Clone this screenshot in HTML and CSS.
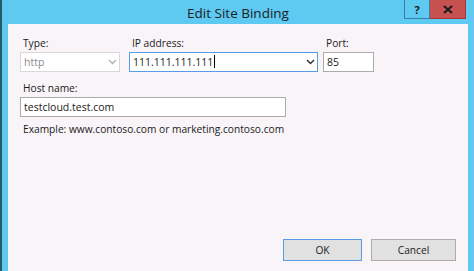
FILE: index.html
```html
<!DOCTYPE html>
<html>
<head>
<meta charset="utf-8">
<link rel="stylesheet" href="styles.css">
</head>
<body>
<div class="window">
  <div class="titlebar">
    <div class="title">Edit Site Binding</div>
    <div class="controls">
      <div class="btn-help">?</div>
      <div class="btn-close">
        <svg width="10" height="9" viewBox="0 0 10 9"><path d="M1 1 L9 8 M9 1 L1 8" stroke="#1a1a1a" stroke-width="2"/></svg>
      </div>
    </div>
  </div>
  <div class="content">
    <div class="row1">
      <div class="field f-type">
        <label>Type:</label>
        <div class="select disabled"><span>http</span><svg class="chev" width="9" height="6" viewBox="0 0 9 6"><path d="M1 1 L4.5 4.5 L8 1" fill="none" stroke="#b0b0b0" stroke-width="1.3"/></svg></div>
      </div>
      <div class="field f-ip">
        <label>IP address:</label>
        <div class="select focus"><span>111.111.111.111<i class="caret"></i></span><svg class="chev" width="9" height="6" viewBox="0 0 9 6"><path d="M1 1 L4.5 4.5 L8 1" fill="none" stroke="#333" stroke-width="1.5"/></svg></div>
      </div>
      <div class="field f-port">
        <label>Port:</label>
        <div class="input"><span>85</span></div>
      </div>
    </div>
    <div class="field f-host">
      <label>Host name:</label>
      <div class="input"><span>testcloud.test.com</span></div>
    </div>
    <div class="example">Example: www.contoso.com or marketing.contoso.com</div>
    <div class="spacer"></div>
    <div class="buttons">
      <div class="button">OK</div>
      <div class="button cancel">Cancel</div>
    </div>
  </div>
</div>
</body>
</html>
```
FILE: styles.css
```css
html, body {
  margin: 0;
  padding: 0;
  width: 474px;
  height: 271px;
  overflow: hidden;
  background: #5ec9f1;
}
.window {
  width: 474px;
  height: 271px;
  box-sizing: border-box;
  background: #5ec9f1;
  border-left: 2px solid #2a5a6a;
  padding: 0 6px 0 6px;
  display: flex;
  flex-direction: column;
  font-family: "Open Sans", sans-serif;
  font-size: 10.2px;
  color: #1a1a1a;
}
.titlebar {
  height: 24px;
  flex: none;
  position: relative;
  display: flex;
  justify-content: center;
  align-items: center;
}
.title {
  font-size: 13.5px;
  color: #1d1d1d;
  margin-top: 1px;
}
.controls {
  position: absolute;
  right: 2px;
  top: 0;
  display: flex;
}
.btn-help {
  width: 26px;
  height: 19px;
  box-sizing: border-box;
  border: 1px solid #3c7fa6;
  border-top: none;
  background: #5ec9f1;
  font-weight: bold;
  font-size: 11px;
  display: flex;
  align-items: center;
  justify-content: center;
  color: #1a1a1a;
}
.btn-close {
  width: 36px;
  height: 19px;
  box-sizing: border-box;
  background: #c75050;
  border-right: 1px solid #a33;
  border-bottom: 1px solid #a33;
  display: flex;
  align-items: center;
  justify-content: center;
}
.content {
  flex: 1;
  background: #f8f4f8;
  padding: 12px 12px 10px 12px;
  display: flex;
  flex-direction: column;
}
.row1 {
  display: flex;
}
.field {
  display: flex;
  flex-direction: column;
}
.field label {
  height: 15px;
  line-height: 15px;
  margin-left: 3px;
  margin-bottom: 1px;
}
.select, .input {
  height: 20px;
  box-sizing: border-box;
  border: 1px solid #ababab;
  background: #fff;
  display: flex;
  align-items: center;
  padding: 0 2px 0 3px;
  justify-content: space-between;
  font-size: 10.5px;
}
.select.disabled {
  border-color: #d9d9d9;
  color: #8a8a8a;
}
.select.focus {
  border-color: #569de5;
}
.caret {
  display: inline-block;
  width: 1px;
  height: 13px;
  background: #000;
  vertical-align: -2px;
  margin-left: 1px;
}
.chev { margin-right: 0; }
.f-type .select { width: 100px; }
.f-ip { margin-left: 9px; }
.f-ip .select { width: 189px; }
.f-port { margin-left: 5px; }
.f-port .input { width: 51px; }
.f-host { margin-top: 9px; }
.f-host .input { width: 266px; }
.example {
  margin-top: 5px;
  margin-left: 3px;
  line-height: 15px;
}
.spacer { flex: 1; }
.buttons {
  display: flex;
  justify-content: flex-end;
  gap: 9px;
  margin-bottom: 0;
}
.button {
  width: 79px;
  height: 22px;
  box-sizing: border-box;
  border: 1px solid #adadad;
  background: #e1e1e1;
  display: flex;
  align-items: center;
  justify-content: center;
}
.button:first-child {
  border-color: #569de5;
}
.button.cancel { width: 85px; }
```
